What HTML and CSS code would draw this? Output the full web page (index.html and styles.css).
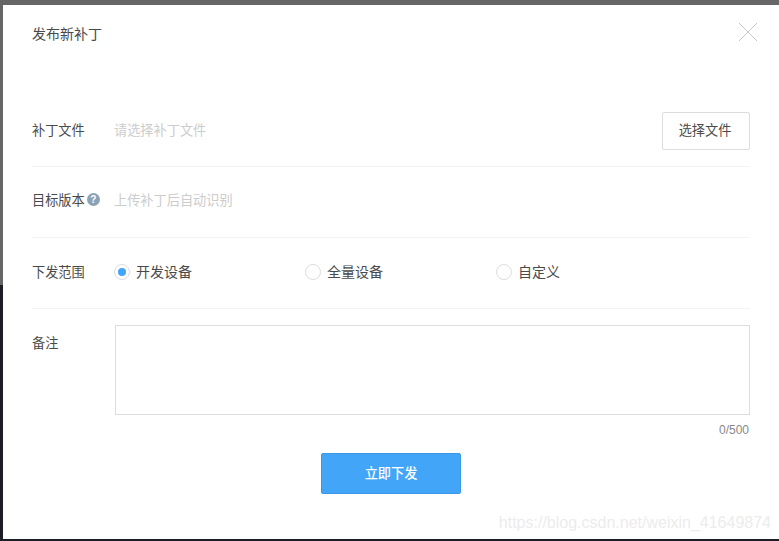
FILE: index.html
```html
<!DOCTYPE html>
<html lang="zh-CN">

<head>
    <meta charset="UTF-8">
    <meta name="viewport" content="width=device-width, initial-scale=1.0">
    <title>发布新补丁</title>
    <link rel="stylesheet" href="styles.css">
</head>

<body>

    <div class="modal">
        <div class="modal-head">
            <div class="modal-title">发布新补丁</div>
            <svg class="close" width="20" height="20" viewBox="0 0 20 20">
                <path d="M1 1L19 19M19 1L1 19" stroke="#c8c8c8" stroke-width="1" fill="none" />
            </svg>
        </div>

        <div class="row row-file">
            <span class="label">补丁文件</span>
            <span class="hint">请选择补丁文件</span>
            <button class="btn-file">选择文件</button>
        </div>

        <div class="row row-version">
            <span class="label">目标版本<span class="help">?</span></span>
            <span class="hint">上传补丁后自动识别</span>
        </div>

        <div class="row row-range">
            <span class="label">下发范围</span>
            <div class="radios">
                <div class="radio radio-on"><i></i><span>开发设备</span></div>
                <div class="radio"><i></i><span>全量设备</span></div>
                <div class="radio"><i></i><span>自定义</span></div>
            </div>
        </div>

        <div class="row-note">
            <span class="label">备注</span>
            <div class="note-box">
                <textarea></textarea>
                <div class="count">0/500</div>
            </div>
        </div>

        <div class="actions">
            <button class="btn-submit">立即下发</button>
        </div>

        <div class="watermark">https://blog.csdn.net/weixin_41649874</div>
    </div>

</body>

</html>
```

FILE: styles.css
```css
* {
    margin: 0;
    padding: 0;
    box-sizing: border-box;
    font-family: "Liberation Sans", "Noto Sans CJK SC", sans-serif;
}

body {
    height: 541px;
    overflow: hidden;
    background: linear-gradient(#666 285px, #1e1c24 285px);
    padding: 5px 0 2px 3px;
}

.modal {
    position: relative;
    height: 534px;
    background: #fff;
    padding: 0 29px;
    font-size: 13.2px;
    color: #4a4a4a;
}

.modal-head {
    position: relative;
    height: 107px;
    padding-top: 21px;
}

.modal-title {
    font-size: 14px;
    line-height: 17px;
}

.close {
    position: absolute;
    top: 17px;
    right: -8px;
}

.row {
    display: flex;
    align-items: center;
    border-bottom: 1px solid #f3f3f3;
}

.row-file {
    height: 55px;
    padding-bottom: 16px;
}

.row-file .label,
.row-file .hint {
    margin-bottom: 3px;
}

.row-version {
    height: 71px;
}

.row-version .label,
.row-version .hint {
    margin-bottom: 5px;
}

.row-range {
    height: 71px;
    padding-bottom: 3px;
}

.label {
    display: flex;
    align-items: center;
    width: 82px;
    flex-shrink: 0;
}

.hint {
    color: #ccc;
    flex: 1;
}

.help {
    width: 13px;
    height: 13px;
    margin-left: 2px;
    border-radius: 50%;
    background: #8ba3b5;
    color: #fff;
    font-size: 10px;
    font-weight: bold;
    line-height: 13px;
    text-align: center;
}

.btn-file {
    width: 88px;
    height: 38px;
    padding: 0 2px 3px 0;
    background: #fff;
    border: 1px solid #ddd;
    border-radius: 2px;
    color: #4a4a4a;
    font-size: 13.2px;
}

.radios {
    display: flex;
}

.radio {
    display: flex;
    align-items: center;
    gap: 6px;
    width: 191px;
    font-size: 14px;
    color: #4a4a4a;
}

.radio span {
    margin-bottom: 2px;
}

.radio i {
    width: 16px;
    height: 16px;
    border: 1px solid #ddd;
    border-radius: 50%;
}

.radio-on i {
    border: 4px solid #fff;
    outline: 1px solid #ddd;
    outline-offset: -1px;
    background: #42a5f8;
}

.row-note {
    display: flex;
    padding-top: 16px;
}

.row-note .label {
    height: 17px;
    margin-top: 9px;
}

.note-box {
    flex: 1;
    margin-left: 1px;
}

textarea {
    display: block;
    width: 100%;
    height: 90px;
    border: 1px solid #ddd;
    resize: none;
    outline: none;
}

.count {
    margin-top: 8px;
    margin-right: 1px;
    text-align: right;
    font-size: 12px;
    line-height: 14px;
    color: #888;
}

.actions {
    display: flex;
    justify-content: center;
    margin-top: 16px;
}

.btn-submit {
    width: 140px;
    height: 41px;
    padding-bottom: 3px;
    background: #42a5f8;
    border: 1px solid #3b97e6;
    border-radius: 2px;
    color: #fff;
    font-size: 13.2px;
    font-weight: 500;
}

.watermark {
    position: absolute;
    right: 8px;
    bottom: 7px;
    font-size: 16px;
    line-height: 18px;
    color: #ececec;
}
```
